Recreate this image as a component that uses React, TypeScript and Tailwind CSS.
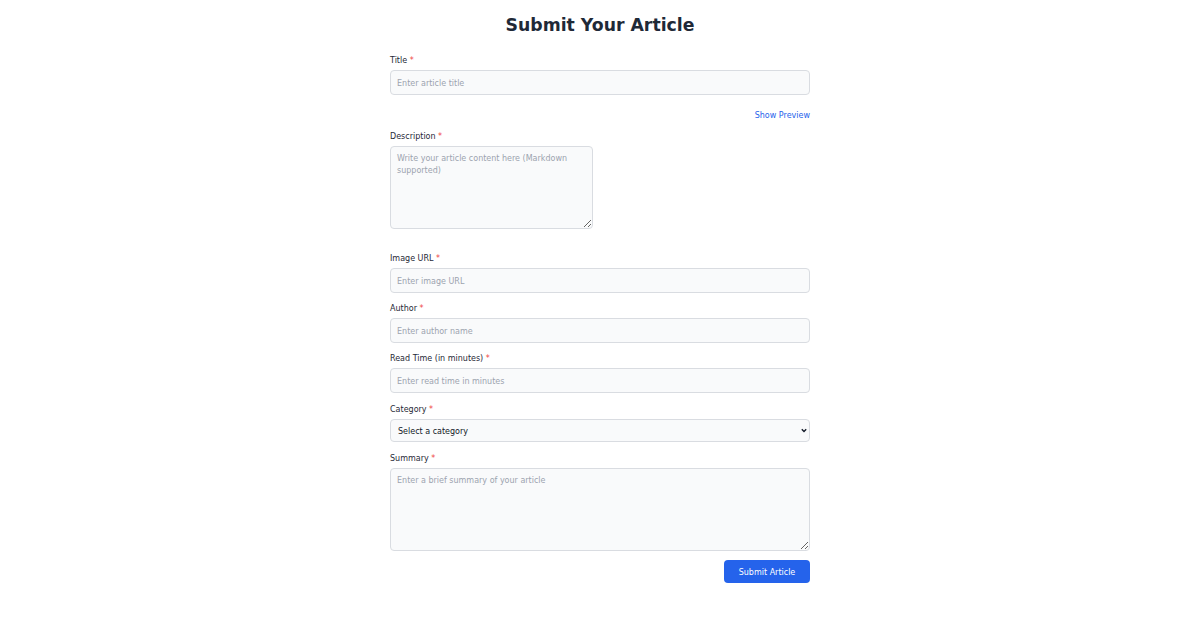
import React from "react";

interface FieldItem {
  label: string;
  placeholder: string;
}

const INPUT_FIELDS: FieldItem[] = [
  { label: "Image URL", placeholder: "Enter image URL" },
  { label: "Author", placeholder: "Enter author name" },
  { label: "Read Time (in minutes)", placeholder: "Enter read time in minutes" },
];

const inputClass =
  "block w-full h-[25px] rounded-[4px] border border-[#d9dce1] bg-[#f9fafb] pl-[6px] pt-[2px] text-[8px] text-[#111827] placeholder:text-[#9ca3af] outline-none";

const textareaClass =
  "block h-[83px] rounded-[4px] border border-[#d9dce1] bg-[#f9fafb] px-[6px] pt-[6px] pb-[4px] text-[8px] leading-[12px] placeholder:text-[#9ca3af] outline-none";

const Label = ({ text }: { text: string }) => (
  <label className="block pt-[2px] mb-[3px] text-[8px] leading-[12px] text-[#1f2937]">
    {text} <span className="text-[#ef4444]">*</span>
  </label>
);

const App = () => {
  return (
    <div className="w-full min-h-[630px] bg-white font-['DejaVu_Sans',sans-serif] leading-[12px]">
      <div className="w-[420px] mx-auto pt-[13px] flex flex-col">
        <h1 className="text-center text-[17.3px] leading-[24px] font-bold text-[#1f2937]">Submit Your Article</h1>

        <div className="mt-[16px]">
          <Label text="Title" />
          <input className={inputClass} placeholder="Enter article title" />
        </div>

        <div className="mt-[15px] flex justify-end">
          <button className="text-[8px] leading-[12px] text-[#2563eb]">Show Preview</button>
        </div>

        <div className="mt-[7px]">
          <Label text="Description" />
          <textarea
            className={`${textareaClass} w-[203px]`}
            placeholder="Write your article content here (Markdown supported)"
          />
        </div>

        <div className="mt-[22px] flex flex-col gap-[8px]">
          {INPUT_FIELDS.map((field) => (
            <div key={field.label}>
              <Label text={field.label} />
              <input className={inputClass} placeholder={field.placeholder} />
            </div>
          ))}
        </div>

        <div className="mt-[9px]">
          <Label text="Category" />
          <div className="relative">
            <select className="block w-full h-[23px] appearance-none rounded-[4px] border border-[#d9dce1] bg-[#f9fafb] pl-[7px] pt-[2px] text-[8px] text-[#111827] outline-none">
              <option>Select a category</option>
            </select>
            <svg
              className="absolute right-[3px] top-[9px] pointer-events-none"
              width="6"
              height="5"
              viewBox="0 0 6 5"
              fill="none"
            >
              <path d="M0.8 1.2 L3 3.4 L5.2 1.2" stroke="#111827" strokeWidth="1.4" />
            </svg>
          </div>
        </div>

        <div className="mt-[9px]">
          <Label text="Summary" />
          <textarea className={`${textareaClass} w-full`} placeholder="Enter a brief summary of your article" />
        </div>

        <div className="mt-[9px] flex justify-end">
          <button className="w-[86px] h-[23px] rounded-[4px] bg-[#2563eb] pt-[2px] text-[8px] text-white">
            Submit Article
          </button>
        </div>
      </div>
    </div>
  );
};

export default App;
